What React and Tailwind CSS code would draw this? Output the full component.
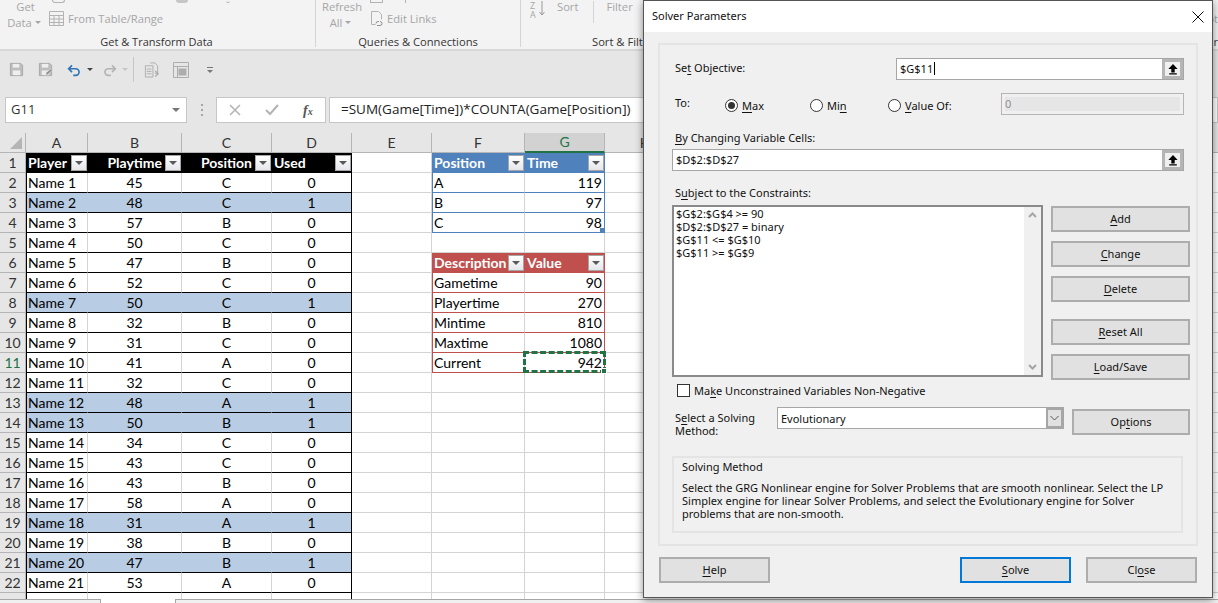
import React from 'react';

const players = [
  ['Name 1', 45, 'C', 0], ['Name 2', 48, 'C', 1], ['Name 3', 57, 'B', 0], ['Name 4', 50, 'C', 0],
  ['Name 5', 47, 'B', 0], ['Name 6', 52, 'C', 0], ['Name 7', 50, 'C', 1], ['Name 8', 32, 'B', 0],
  ['Name 9', 31, 'C', 0], ['Name 10', 41, 'A', 0], ['Name 11', 32, 'C', 0], ['Name 12', 48, 'A', 1],
  ['Name 13', 50, 'B', 1], ['Name 14', 34, 'C', 0], ['Name 15', 43, 'C', 0], ['Name 16', 43, 'B', 0],
  ['Name 17', 58, 'A', 0], ['Name 18', 31, 'A', 1], ['Name 19', 38, 'B', 0], ['Name 20', 47, 'B', 1],
  ['Name 21', 53, 'A', 0],
];

// side tables, keyed by sheet row
const sideRows = {
  1: { kind: 'blueHead', f: 'Position', g: 'Time' },
  2: { kind: 'blue', f: 'A', g: 119 },
  3: { kind: 'blue', f: 'B', g: 97 },
  4: { kind: 'blue', f: 'C', g: 98 },
  6: { kind: 'redHead', f: 'Description', g: 'Value' },
  7: { kind: 'red', f: 'Gametime', g: 90 },
  8: { kind: 'red', f: 'Playertime', g: 270 },
  9: { kind: 'red', f: 'Mintime', g: 810 },
  10: { kind: 'red', f: 'Maxtime', g: 1080 },
  11: { kind: 'red', f: 'Current', g: 942, selected: true },
};

const Filter = () => (
  <span className="ml-auto mr-px flex h-[16px] w-[16px] shrink-0 items-center justify-center border border-[#a6a6a6] bg-gradient-to-b from-white to-[#e4e6ea]">
    <span className="h-0 w-0 border-x-[4px] border-t-[4px] border-x-transparent border-t-[#595959]" />
  </span>
);

const ColHead = ({ w, label, active }) => (
  <div className={`flex h-full shrink-0 items-center justify-center border-r border-[#b5b5b5] text-[14px] ${w} ${active ? 'border-b-2 border-b-[#217346] bg-[#d2d2d2] text-[#217346]' : 'border-b border-b-[#b5b5b5] text-[#333]'}`}>
    {label}
  </div>
);

const RowNum = ({ n }) => (
  <div className={`flex w-[26px] shrink-0 items-center justify-center border-b border-r border-[#b5b5b5] bg-[#e6e6e6] text-[14px] ${n === 11 ? 'text-[#217346]' : 'text-[#333]'}`}>{n}</div>
);

const HeadCell = ({ w, label, color }) => (
  <div className={`flex shrink-0 items-center pl-[2px] font-bold text-white ${w} ${color}`}>
    <span>{label}</span>
    <Filter />
  </div>
);

const PlayerRow = ({ p }) => {
  const on = p[3] === 1;
  const cell = `flex shrink-0 items-center border-b border-b-black ${on ? 'bg-[#b8cce4] border-r-[#b8cce4]' : 'border-r-[#d4d4d4]'} border-r`;
  return (
    <>
      <div className={`${cell} w-[62px] border-l border-l-black pl-[1px]`}>{p[0]}</div>
      <div className={`${cell} w-[94px] justify-center`}>{p[1]}</div>
      <div className={`${cell} w-[90px] justify-center`}>{p[2]}</div>
      <div className={`flex w-[80px] shrink-0 items-center justify-center border-b border-r border-b-black border-r-black ${on ? 'bg-[#b8cce4]' : ''}`}>{p[3]}</div>
    </>
  );
};

const SideCells = ({ row }) => {
  if (!row) {
    return (
      <>
        <div className="w-[93px] shrink-0 border-b border-r border-[#d4d4d4]" />
        <div className="w-[80px] shrink-0 border-b border-r border-[#d4d4d4]" />
      </>
    );
  }
  if (row.kind === 'blueHead' || row.kind === 'redHead') {
    const color = row.kind === 'blueHead' ? 'bg-[#4f81bd]' : 'bg-[#c0504d]';
    return (
      <>
        <HeadCell w="w-[93px]" label={row.f} color={color} />
        <HeadCell w="w-[80px]" label={row.g} color={color} />
      </>
    );
  }
  const line = row.kind === 'blue' ? 'border-b-[#4f81bd] border-l-[#4f81bd]' : 'border-b-[#c0504d] border-l-[#c0504d]';
  const bottom = row.kind === 'blue' ? 'border-b-[#4f81bd]' : 'border-b-[#c0504d]';
  const edge = row.kind === 'blue' ? 'border-r-[#4f81bd]' : 'border-r-[#c0504d]';
  return (
    <>
      <div className={`flex w-[93px] shrink-0 items-center border-b border-l border-r border-r-[#d4d4d4] pl-[1px] ${line}`}>{row.f}</div>
      <div className={`relative flex w-[80px] shrink-0 items-center justify-end border-b border-r pr-[2px] ${bottom} ${edge}`}>
        {row.g}
        {row.selected ? (
          <>
            <span className="absolute bottom-[-1px] left-[-2px] right-[-2px] top-[-2px] border-[3px] border-dashed border-[#217346]" />
            <span className="absolute bottom-[-2px] right-[-3px] h-[6px] w-[6px] border border-white bg-[#217346]" />
          </>
        ) : null}
        {row.f === 'C' ? <span className="absolute bottom-0 right-0 h-[4px] w-[4px] bg-[#4f81bd]" /> : null}
      </div>
    </>
  );
};

const SheetRow = ({ n, children }) => (
  <div className="flex h-[20px] shrink-0">
    <RowNum n={n} />
    {children}
    <div className="w-[80px] shrink-0 border-b border-r border-[#d4d4d4]" />
    <SideCells row={sideRows[n]} />
    <div className="flex-1 border-b border-[#d4d4d4]" />
  </div>
);

const Sheet = () => (
  <div className="flex flex-col font-['Lato',sans-serif] text-[14px] leading-none text-black">
    <div className="flex h-[20px] shrink-0 bg-[#e6e6e6]">
      <div className="flex w-[26px] shrink-0 items-end justify-end border-b border-r border-[#b5b5b5] p-[3px]">
        <span className="h-0 w-0 border-b-[12px] border-l-[12px] border-b-[#b5b5b5] border-l-transparent" />
      </div>
      <ColHead w="w-[62px]" label="A" />
      <ColHead w="w-[94px]" label="B" />
      <ColHead w="w-[90px]" label="C" />
      <ColHead w="w-[80px]" label="D" />
      <ColHead w="w-[80px]" label="E" />
      <ColHead w="w-[93px]" label="F" />
      <ColHead w="w-[80px]" label="G" active />
      <ColHead w="w-[81px]" label="H" />
      <div className="flex-1 border-b border-[#b5b5b5]" />
    </div>
    <SheetRow n={1}>
      <div className="flex w-[62px] shrink-0 items-center bg-black pl-[2px] font-bold text-white"><span>Player</span><Filter /></div>
      <div className="flex w-[94px] shrink-0 items-center justify-end bg-black font-bold text-white"><span className="mr-[3px]">Playtime</span><span className="flex w-[17px]"><Filter /></span></div>
      <div className="flex w-[90px] shrink-0 items-center justify-end bg-black font-bold text-white"><span className="mr-[3px]">Position</span><span className="flex w-[17px]"><Filter /></span></div>
      <div className="flex w-[80px] shrink-0 items-center bg-black pl-[2px] font-bold text-white"><span>Used</span><Filter /></div>
    </SheetRow>
    {players.map((p, i) => (
      <SheetRow key={p[0]} n={i + 2}>
        <PlayerRow p={p} />
      </SheetRow>
    ))}
    <div className="flex h-[6px] shrink-0">
      <div className="w-[26px] shrink-0 border-r border-[#b5b5b5] bg-[#e6e6e6]" />
      <div className="w-[62px] shrink-0 border-l border-r border-l-black border-r-[#d4d4d4]" />
      <div className="w-[94px] shrink-0 border-r border-[#d4d4d4]" />
      <div className="w-[90px] shrink-0 border-r border-[#d4d4d4]" />
      <div className="w-[80px] shrink-0 border-r border-black" />
      <div className="w-[80px] shrink-0 border-r border-[#d4d4d4]" />
      <div className="w-[93px] shrink-0 border-r border-[#d4d4d4]" />
      <div className="w-[80px] shrink-0 border-r border-[#d4d4d4]" />
    </div>
    <div className="flex h-[4px] shrink-0">
      <div className="h-full w-[101px] border-r border-t border-[#a6a6a6] bg-[#f0f0f0]" />
      <div className="w-[74px] bg-white" />
      <div className="h-full flex-1 border-l border-t border-[#a6a6a6] bg-[#f0f0f0]" />
    </div>
  </div>
);

const Floppy = ({ pen }) => (
  <svg width="15" height="15" viewBox="0 0 16 16" fill="none">
    <path d="M1.500 1.500h11l2 2v11h-13z" stroke="#a6a6a6" fill="#bdbdbd" />
    <rect x="4" y="2" width="7" height="4" fill="#eee" />
    <rect x="4" y="9" width="8" height="5" fill="#eee" />
    {pen ? <path d="M8 14l1-3 5-4 1.500 1.500-5 5z" fill="#8f8f8f" stroke="#eee" strokeWidth=".7" /> : null}
  </svg>
);

const Caret = ({ c = '#a6a6a6', className = 'mx-[3px]' }) => (
  <span className={`inline-block h-0 w-0 border-x-[3px] border-t-[3px] border-x-transparent ${className}`} style={{ borderTopColor: c }} />
);

const QuickAccess = () => (
  <div className="flex h-[37px] shrink-0 items-center bg-[#e6e6e6] pl-[9px]">
    <Floppy />
    <span className="ml-[14px] flex"><Floppy pen /></span>
    <svg className="ml-[14px]" width="15" height="14" viewBox="0 0 18 16" fill="none">
      <path d="M2.500 6.500h8a4 4 0 0 1 0 8h-3M6 2.500l-4 4 4 4" stroke="#2e75b6" strokeWidth="2" />
    </svg>
    <Caret c="#444" className="ml-[5px]" />
    <svg className="ml-[9px]" width="15" height="14" viewBox="0 0 18 16" fill="none">
      <path d="M15.500 6.500h-8a4 4 0 0 0 0 8h3M12 2.500l4 4-4 4" stroke="#b3b3b3" strokeWidth="2" />
    </svg>
    <Caret c="#c6c6c6" className="ml-[5px]" />
    <span className="ml-[5px] h-[25px] w-px bg-[#c6c6c6]" />
    <svg className="ml-[10px]" width="16" height="17" viewBox="0 0 17 17" fill="none" stroke="#adadad">
      <path d="M1.500 4.500h8v12h-8zM6.500 1.500h5l3 3v8h-3M3 8h5M3 10.500h5M3 13h5" />
      <path d="M12 10l3 3-3 3" strokeWidth="1.400" />
    </svg>
    <svg className="ml-[13px]" width="16" height="16" viewBox="0 0 16 16" fill="none" stroke="#adadad">
      <path d="M.5 .5h15v15H.5zM.5 4.500h15M4.500 4.500v11" />
      <rect x="6" y="7" width="7" height="6" fill="#adadad" />
    </svg>
    <span className="ml-[18px] flex flex-col items-center gap-[2px]">
      <span className="h-px w-[6px] bg-[#777]" />
      <span className="h-0 w-0 border-x-[3px] border-t-[3px] border-x-transparent border-t-[#777]" />
    </span>
  </div>
);

const FormulaBar = () => (
  <div className="flex h-[45px] shrink-0 items-start bg-[#e6e6e6] pl-[5px] pt-[9px] font-['Open_Sans',sans-serif] text-[13px] text-[#333]">
    <div className="flex h-[26px] w-[182px] items-center border border-[#c6c6c6] bg-white pl-[5px] pr-[6px]">
      G11
      <span className="ml-auto h-0 w-0 border-x-[4px] border-t-[4px] border-x-transparent border-t-[#777]" />
    </div>
    <div className="ml-[14px] mt-[7px] flex flex-col gap-[3px]">
      <span className="h-[2px] w-[2px] bg-[#a6a6a6]" />
      <span className="h-[2px] w-[2px] bg-[#a6a6a6]" />
      <span className="h-[2px] w-[2px] bg-[#a6a6a6]" />
    </div>
    <div className="ml-[13px] flex h-[26px] w-[110px] items-center border border-[#c6c6c6] bg-white pl-[12px]">
      <svg width="12" height="12" viewBox="0 0 12 12" stroke="#b3b3b3" strokeWidth="1.500"><path d="M1 1l10 10M11 1L1 11" /></svg>
      <svg className="ml-[24px]" width="14" height="12" viewBox="0 0 14 12" fill="none" stroke="#b3b3b3" strokeWidth="2"><path d="M1 6l4 4 8-9" /></svg>
      <span className="ml-[24px] font-['Liberation_Serif',serif] text-[14px] font-bold italic text-[#555]">f<span className="text-[10px]">x</span></span>
    </div>
    <div className="ml-[3px] flex h-[26px] flex-1 items-center border border-[#c6c6c6] bg-white pl-[11px] text-[13.500px] leading-none text-[#222]">
      =SUM(Game[Time])*COUNTA(Game[Position])
    </div>
  </div>
);

const Ribbon = () => (
  <div className="flex h-[51px] shrink-0 border-b-2 border-[#d8d8d8] bg-[#f3f3f3] pb-[2px] font-['Open_Sans',sans-serif] text-[11.200px] leading-none text-[#a6a6a6]">
    <div className="flex w-[316px] shrink-0 flex-col border-r border-r-[#d4d4d4]">
      <div className="flex h-[37px] pl-[9px]">
        <div className="flex w-[33px] flex-col items-center gap-[5px] pt-[1px]">
          <span>Get</span>
          <span className="flex items-center">Data<Caret /></span>
        </div>
        <div className="ml-[7px] flex flex-col">
          <div className="flex h-[3px]">
            <span className="ml-[3px] h-[3px] w-[13px] rounded-b-[3px] border-x border-b border-[#b3b3b3]" />
            <span className="ml-[111px] h-[3px] w-[12px] rounded-b-[3px] bg-[#c6c6c6]" />
            <span className="ml-[38px] h-[3px] w-[4px] rounded-b-[3px] border-b border-[#b3b3b3]" />
          </div>
          <div className="mt-[8px] flex items-center">
            <svg width="15" height="15" viewBox="0 0 15 15" fill="none" stroke="#b3b3b3"><path d="M.5 .5h14v14H.5zM.5 4.500h14M.5 8h14M.5 11.500h14M5 4.500v10M10 4.500v10" /></svg>
            <span className="ml-[4px]">From Table/Range</span>
          </div>
        </div>
      </div>
      <div className="pr-[2px] text-center text-[11px] text-[#333]">Get &amp; Transform Data</div>
    </div>
    <div className="flex w-[205px] shrink-0 flex-col border-r border-r-[#d4d4d4]">
      <div className="flex h-[37px] pl-[6px]">
        <div className="flex w-[40px] flex-col items-center gap-[5px] pt-[1px]">
          <span>Refresh</span>
          <span className="flex items-center">All<Caret /></span>
        </div>
        <div className="ml-[8px] flex flex-col">
          <div className="flex h-[3px]">
            <span className="h-[3px] w-[13px] border-x border-b border-[#b3b3b3]" />
            <span className="ml-[22px] h-[3px] w-px bg-[#b3b3b3]" />
          </div>
          <div className="mt-[8px] flex items-center">
            <svg width="14" height="16" viewBox="0 0 14 16" fill="none" stroke="#b3b3b3"><path d="M1.500 .5h7l3 3v5M1.500 .5v13h4" /><path d="M6 12.500a2 2 0 0 1 2-2h1M7 14.500h3M10 10.500a2 2 0 0 1 0 4" stroke="#8f8f8f" /></svg>
            <span className="ml-[3px]">Edit Links</span>
          </div>
        </div>
      </div>
      <div className="text-center text-[#333]">Queries &amp; Connections</div>
    </div>
    <div className="flex flex-1 flex-col pl-[9px]">
      <div className="flex h-[37px] pt-[1px]">
        <span className="flex w-[9px] flex-col text-[9px] leading-[9px]"><span>Z</span><span>A</span></span>
        <svg width="6" height="16" viewBox="0 0 6 16" fill="none" stroke="#9a9a9a"><path d="M3 0v14M.5 11l2.500 3 2.500-3" /></svg>
        <span className="ml-[12px]">Sort</span>
        <span className="ml-[15px] h-[22px] w-px bg-[#d4d4d4]" />
        <span className="ml-[12px]">Filter</span>
        <span className="ml-auto mt-[12px]">pt</span>
      </div>
      <div className="flex">
        <span className="ml-[62px] text-[#333]">Sort &amp; Filter</span>
        <span className="ml-auto text-[#333]">ur</span>
      </div>
    </div>
  </div>
);

const UpBtn = () => (
  <span className="flex w-[21px] shrink-0 items-center justify-center self-stretch border-[3px] border-[#b5b5b5] bg-[#f0f0f0]">
    <svg width="10" height="11" viewBox="0 0 11 13" fill="#000"><path d="M5.500 0L11 6H7.500v4h-4V6H0zM1 11h9v1.500H1z" /></svg>
  </span>
);

const Key = ({ children }) => <span className="underline underline-offset-2">{children}</span>;

const Radio = ({ on }) => (
  <span className="flex h-[13px] w-[13px] items-center justify-center rounded-full border border-[#333] bg-white">
    {on ? <span className="h-[7px] w-[7px] rounded-full bg-[#333]" /> : null}
  </span>
);

const Btn = ({ className = '', focus, children }) => (
  <button className={`flex shrink-0 items-center justify-center border-2 bg-[#e1e1e1] pb-[2px] ${focus ? 'border-[#0078d7]' : 'border-[#adadad]'} ${className}`}>{children}</button>
);

const Solver = () => (
  <div className="absolute left-[643px] top-0 flex h-[598px] w-[570px] flex-col border border-[#555] bg-[#f0f0f0] font-['Noto_Sans',sans-serif] text-[11px] leading-none text-[#111] shadow-[0_2px_8px_rgba(0,0,0,0.45)]">
    <div className="flex h-[31px] shrink-0 items-center justify-between bg-white px-[8px]">
      <span className="mb-[2px]">Solver Parameters</span>
      <svg width="12" height="12" viewBox="0 0 12 12" stroke="#111"><path d="M.5 .5l11 11M11.500 .5l-11 11" /></svg>
    </div>
    <div className="mx-[14px] mt-[11px] flex h-[503px] shrink-0 flex-col border-2 border-[#e4e4e4] pl-[12px]">
      <div className="mt-[13px] flex h-[22px] items-center">
        <span className="mb-[4px] w-[224px] pl-[3px]">Se<Key>t</Key> Objective:</span>
        <div className="flex h-full w-[288px] border border-[#a6a6a6] bg-white">
          <span className="flex flex-1 items-center pb-[2px] pl-[3px]">$G$11<span className="ml-px h-[13px] w-px bg-black" /></span>
          <UpBtn />
        </div>
      </div>
      <div className="mt-[13px] flex h-[22px] items-center">
        <span className="mb-[4px] w-[53px] pl-[3px]">To:</span>
        <span className="mt-[2px] flex w-[85px] items-center gap-[4px]"><Radio on /><span><Key>M</Key>ax</span></span>
        <span className="mt-[2px] flex w-[78px] items-center gap-[4px]"><Radio /><span>Mi<Key>n</Key></span></span>
        <span className="mt-[2px] flex w-[113px] items-center gap-[4px]"><Radio /><span><Key>V</Key>alue Of:</span></span>
        <div className="flex h-full w-[183px] items-center border border-[#b5b5b5] bg-[#f0f0f0] p-[3px] text-[#8f8f8f]">
          <span className="flex h-full w-full items-center bg-[#e6e6e6] pb-[2px]">0</span>
        </div>
      </div>
      <span className="mt-[17px] pl-[3px]"><Key>B</Key>y Changing Variable Cells:</span>
      <div className="mt-[6px] flex h-[22px] w-[512px] border border-[#a6a6a6] bg-white">
        <span className="flex flex-1 items-center pb-[2px] pl-[3px]">$D$2:$D$27</span>
        <UpBtn />
      </div>
      <span className="mt-[16px] pl-[3px]">S<Key>u</Key>bject to the Constraints:</span>
      <div className="mt-[7px] flex h-[172px] gap-[8px]">
        <div className="flex w-[371px] border-2 border-[#8a8a8a] bg-white">
          <div className="flex flex-1 flex-col gap-[2px] pl-[2px] pt-[1px] leading-[11px]">
            <span>$G$2:$G$4 &gt;= 90</span>
            <span>$D$2:$D$27 = binary</span>
            <span>$G$11 &lt;= $G$10</span>
            <span>$G$11 &gt;= $G$9</span>
          </div>
          <div className="flex w-[17px] flex-col items-center justify-between bg-[#f0f0f0] py-[5px]">
            <svg width="9" height="6" viewBox="0 0 9 6" fill="none" stroke="#a6a6a6" strokeWidth="2"><path d="M1 5l3.500-3.500L8 5" /></svg>
            <svg width="9" height="6" viewBox="0 0 9 6" fill="none" stroke="#a6a6a6" strokeWidth="2"><path d="M1 1l3.500 3.500L8 1" /></svg>
          </div>
        </div>
        <div className="flex w-[139px] flex-col pt-px">
          <Btn className="h-[26px]"><span><Key>A</Key>dd</span></Btn>
          <Btn className="mt-[9px] h-[26px]"><span><Key>C</Key>hange</span></Btn>
          <Btn className="mt-[9px] h-[26px]"><span><Key>D</Key>elete</span></Btn>
          <Btn className="mt-[17px] h-[26px]"><span><Key>R</Key>eset All</span></Btn>
          <Btn className="mt-[9px] h-[26px]"><span><Key>L</Key>oad/Save</span></Btn>
        </div>
      </div>
      <div className="mt-[7px] flex items-center pl-[5px]">
        <span className="h-[13px] w-[13px] border border-[#333] bg-white" />
        <span className="ml-[4px]">Ma<Key>k</Key>e Unconstrained Variables Non-Negative</span>
      </div>
      <div className="mt-[10px] flex items-start">
        <span className="w-[105px] pl-[3px] pt-[4px] leading-[13px]">S<Key>e</Key>lect a Solving<br />Method:</span>
        <div className="flex h-[22px] w-[287px] border border-[#a6a6a6] bg-white">
          <span className="flex flex-1 items-center pl-[3px]">Evolutionary</span>
          <span className="flex w-[17px] items-center justify-center border-[2px] border-[#a6a6a6] bg-[#e1e1e1]">
            <svg width="9" height="6" viewBox="0 0 9 6" fill="none" stroke="#555"><path d="M.5 1l4 4 4-4" /></svg>
          </span>
        </div>
        <Btn className="ml-[8px] mt-[2px] h-[26px] w-[118px]"><span>Op<Key>t</Key>ions</span></Btn>
      </div>
      <div className="mt-[19px] flex h-[77px] w-[511px] flex-col border-2 border-[#e4e4e4] pl-[8px] leading-[13px]">
        <span className="mt-[2px]">Solving Method</span>
        <span className="mt-[8px] w-[490px]">Select the GRG Nonlinear engine for Solver Problems that are smooth nonlinear. Select the LP Simplex engine for linear Solver Problems, and select the Evolutionary engine for Solver problems that are non-smooth.</span>
      </div>
    </div>
    <div className="mx-[15px] mt-[11px] flex">
      <Btn className="h-[26px] w-[111px]"><span><Key>H</Key>elp</span></Btn>
      <Btn focus className="ml-auto h-[26px] w-[111px]"><span><Key>S</Key>olve</span></Btn>
      <Btn className="ml-[15px] h-[26px] w-[111px]"><span>Cl<Key>o</Key>se</span></Btn>
    </div>
  </div>
);

export default function App() {
  return (
    <div className="relative flex h-[603px] w-[1218px] flex-col overflow-hidden bg-white">
      <Ribbon />
      <QuickAccess />
      <FormulaBar />
      <Sheet />
      <Solver />
    </div>
  );
}
